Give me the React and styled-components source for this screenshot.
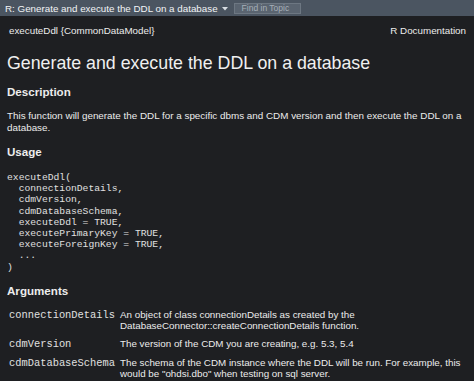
import React from "react";
import styled, { createGlobalStyle } from "styled-components";

const GlobalStyle = createGlobalStyle`
  html, body {
    margin: 0;
    padding: 0;
    background: #1e1f22;
  }
  body {
    font-family: "Liberation Sans", Arial, sans-serif;
    color: #ececec;
  }
`;

const args = [
  {
    name: "connectionDetails",
    desc: "An object of class connectionDetails as created by the DatabaseConnector::createConnectionDetails function.",
  },
  {
    name: "cdmVersion",
    desc: "The version of the CDM you are creating, e.g. 5.3, 5.4",
  },
  {
    name: "cdmDatabaseSchema",
    desc: 'The schema of the CDM instance where the DDL will be run. For example, this would be "ohdsi.dbo" when testing on sql server.',
  },
];

const usage = `executeDdl(
  connectionDetails,
  cdmVersion,
  cdmDatabaseSchema,
  executeDdl = TRUE,
  executePrimaryKey = TRUE,
  executeForeignKey = TRUE,
  ...
)`;

function App() {
  return (
    <Page>
      <GlobalStyle />
      <Toolbar>
        <TopicTitle>R: Generate and execute the DDL on a database</TopicTitle>
        <Caret>
          <svg width="6" height="4" viewBox="0 0 6 4">
            <path d="M0 0 L6 0 L3 3.5 Z" fill="#d8dde2" />
          </svg>
        </Caret>
        <FindBox>Find in Topic</FindBox>
      </Toolbar>
      <Content>
        <HeaderRow>
          <span>executeDdl {"{CommonDataModel}"}</span>
          <span>R Documentation</span>
        </HeaderRow>
        <Title>Generate and execute the DDL on a database</Title>
        <Section>Description</Section>
        <Para>
          This function will generate the DDL for a specific dbms and CDM
          version and then execute the DDL on a database.
        </Para>
        <Section>Usage</Section>
        <Code>{usage}</Code>
        <Section>Arguments</Section>
        <ArgTable>
          {args.map((a) => (
            <ArgRow key={a.name}>
              <ArgName>{a.name}</ArgName>
              <ArgDesc>{a.desc}</ArgDesc>
            </ArgRow>
          ))}
        </ArgTable>
      </Content>
    </Page>
  );
}

export default App;

const Page = styled.div`
  width: 474px;
  height: 381px;
  overflow: hidden;
  background: #1e1f22;
`;

const Toolbar = styled.div`
  height: 16px;
  background: #4b5561;
  display: flex;
  align-items: center;
  padding-left: 5px;
`;

const TopicTitle = styled.div`
  font-size: 9.8px;
  color: #f2f4f6;
  white-space: nowrap;
`;

const Caret = styled.div`
  display: flex;
  align-items: center;
  margin-left: 4px;
  margin-top: 2px;
`;

const FindBox = styled.div`
  margin-left: 6px;
  width: 67px;
  height: 11px;
  box-sizing: border-box;
  background: #5a6470;
  border: 1px solid #6d7782;
  color: #a6afb8;
  font-size: 8.5px;
  line-height: 9px;
  padding-left: 7px;
`;

const Content = styled.div`
  padding: 0 8px 0 7px;
`;

const HeaderRow = styled.div`
  display: flex;
  justify-content: space-between;
  font-size: 9.8px;
  padding: 8px 0 0 2px;
  line-height: 13px;
`;

const Title = styled.h1`
  margin: 15px 0 7px;
  font-size: 17.8px;
  font-weight: normal;
  line-height: 22px;
  color: #f0f0f0;
`;

const Section = styled.h3`
  margin: 10px 0 0;
  font-size: 11.6px;
  font-weight: bold;
  line-height: 15px;
`;

const Para = styled.p`
  margin: 11px 0 0;
  font-size: 9.85px;
  line-height: 12px;
`;

const Code = styled.pre`
  margin: 13px 0 0;
  font-family: "Liberation Mono", "Courier New", monospace;
  font-size: 9.7px;
  line-height: 11.2px;
  color: #e0e0e0;
`;

const ArgTable = styled.div`
  display: flex;
  flex-direction: column;
  gap: 7px;
  margin-top: 11px;
  padding-left: 2px;
`;

const ArgRow = styled.div`
  display: grid;
  grid-template-columns: 111px 1fr;
  align-items: baseline;
`;

const ArgName = styled.div`
  font-family: "Liberation Mono", "Courier New", monospace;
  font-size: 10.4px;
  line-height: 11px;
  color: #e0e0e0;
`;

const ArgDesc = styled.div`
  font-size: 9.8px;
  line-height: 11px;
`;
